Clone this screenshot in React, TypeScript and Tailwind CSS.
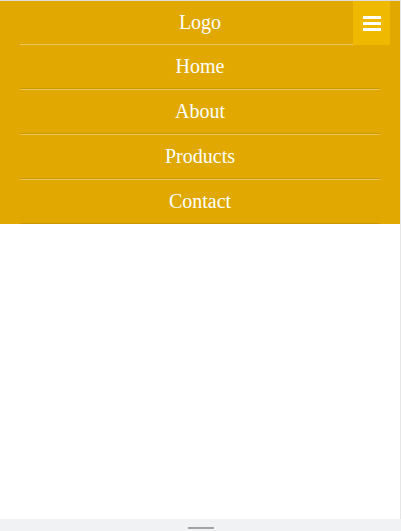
import React from "react";

export default function App() {
  const items = ["Home", "About", "Products", "Contact"];
  return (
    <div className="relative w-[401px] h-[531px] bg-white overflow-hidden" style={{ fontFamily: '"Liberation Serif", "Times New Roman", serif' }}>
      <div className="h-px w-full bg-[#dcdcdc]" />
      <nav className="relative w-[400px] bg-[#e0a800] px-5">
        <div className="h-[43px] flex items-center justify-center pb-[2px] text-white text-[20px] leading-none">Logo</div>
        <ul>
          {items.map((t) => (
            <li
              key={t}
              className="h-[45px] flex items-center justify-center pb-[2px] border-t border-b border-t-[#ecc75a] border-b-[#c99700] text-white text-[20px] leading-none"
            >
              {t}
            </li>
          ))}
        </ul>
        <button className="absolute right-[10px] top-0 w-[37px] h-[44px] bg-[#efb900] flex flex-col items-center justify-center gap-[3px]">
          <span className="block w-[18px] h-[3px] bg-white" />
          <span className="block w-[18px] h-[3px] bg-white" />
          <span className="block w-[18px] h-[3px] bg-white" />
        </button>
      </nav>
      <div className="absolute right-0 top-0 w-px h-full bg-[#e6e6e6]" />
      <div className="absolute left-0 bottom-0 w-full h-[12px] bg-[#f1f2f4] flex justify-center">
        <div className="mt-[8px] w-[26px] h-[2px] bg-[#a3a3a3]" />
      </div>
    </div>
  );
}
